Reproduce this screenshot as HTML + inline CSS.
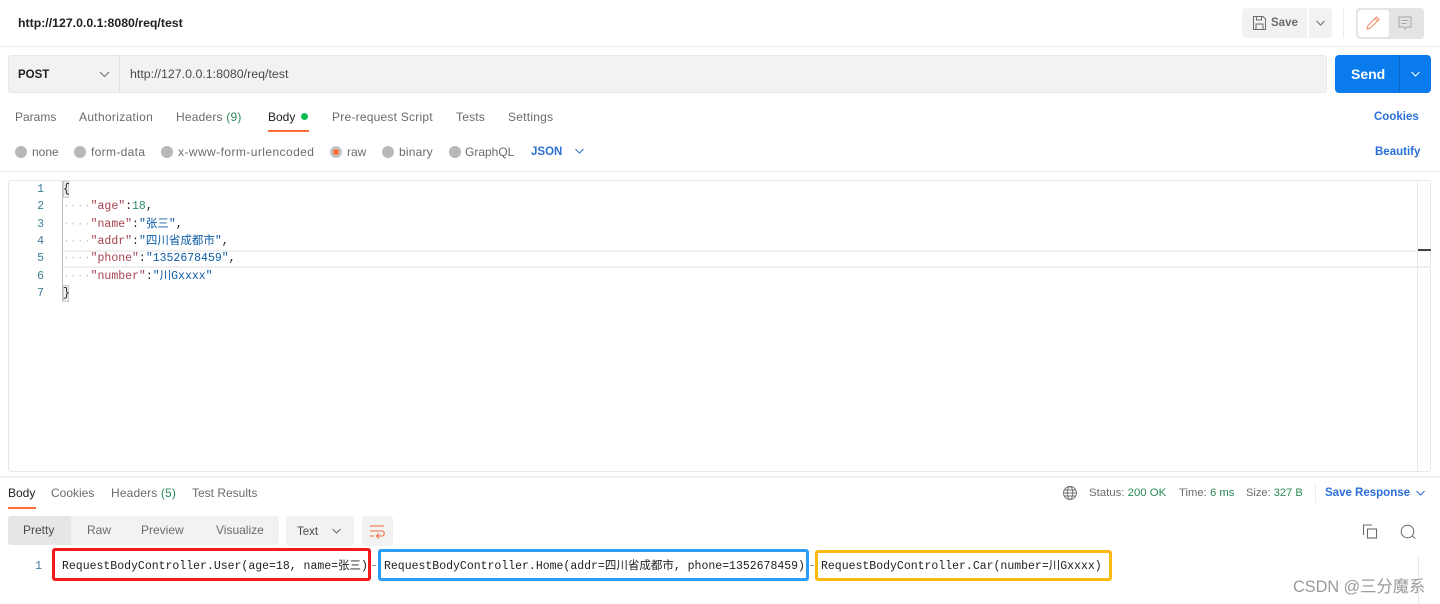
<!DOCTYPE html>
<html><head><meta charset="utf-8">
<style>
html,body{margin:0;padding:0;background:#fff}
#p{position:relative;width:1440px;height:604px;overflow:hidden;background:#fff;font-family:"Liberation Sans","Noto Sans CJK SC",sans-serif;font-size:12px;color:#6b6b6b;filter:blur(.3px)}
#p div,#p svg{position:absolute}
.t{white-space:nowrap;line-height:16px}
.m{font-family:"Liberation Mono","Noto Sans CJK SC",monospace;font-size:11.5px;white-space:pre;line-height:17px}
.n{color:#3f7f97;width:20px;text-align:right;left:24px}
.k{color:#a5424f}.s{color:#0f5ea8}.d{color:#c9c9c9}.g{color:#2f8f6b}.b{color:#212121}
.r{width:12px;height:12px;border-radius:50%;background:#b8b8b8;top:146px}
.gr{color:#2a8a55}
</style></head><body><div id="p">

<div class="t" style="left:18px;top:15px;font-size:12.3px;font-weight:bold;color:#212121">http://127.0.0.1:8080/req/test</div>
<div style="left:1242px;top:8px;width:65px;height:30px;background:#f2f2f2;border-radius:4px 0 0 4px"></div>
<div style="left:1309px;top:8px;width:23px;height:30px;background:#f2f2f2;border-radius:0 4px 4px 0"></div>
<svg style="left:1252px;top:15px" width="15" height="16" viewBox="0 0 15 16" fill="none" stroke="#6b6b6b" stroke-width="1"><path d="M1.5 1.5H11L13.5 4V14.5H1.5Z M4 14.5V9H11V14.5 M4.5 1.5V5H9.5V1.5"/></svg>
<div class="t" style="left:1271px;top:15px;font-size:11.5px;font-weight:bold;color:#6b6b6b">Save</div>
<svg style="left:1315px;top:19px" width="11" height="8" viewBox="0 0 11 8" fill="none" stroke="#6b6b6b"><path d="M1.5 2L5.5 6L9.5 2"/></svg>
<div style="left:1343px;top:8px;width:1px;height:30px;background:#ededed"></div>
<div style="left:1356px;top:8px;width:68px;height:31px;background:#e4e4e4;border-radius:4px"></div>
<div style="left:1358px;top:10px;width:31px;height:27px;background:#fff;border-radius:3px"></div>
<svg style="left:1365px;top:15px" width="16" height="16" viewBox="0 0 16 16" fill="none" stroke="#f2906e" stroke-width="1.1"><path d="M2 14L3 10.5L11.5 2L14 4.5L5.5 13Z M10 3.5L12.5 6"/></svg>
<svg style="left:1397px;top:15px" width="16" height="16" viewBox="0 0 16 16" fill="none" stroke="#a6a6a6"><path d="M2 2H14V12H9.5L8 14L6.5 12H2Z M4.5 5.5H11.5 M4.5 8.5H9.5"/></svg>
<div style="left:0;top:46px;width:1440px;height:1px;background:#ededed"></div>

<div style="left:8px;top:55px;width:1319px;height:38px;background:#f2f2f2;border:1px solid #e8e8e8;border-radius:3px;box-sizing:border-box"></div>
<div style="left:119px;top:55px;width:1px;height:38px;background:#e4e4e4"></div>
<div class="t" style="left:18px;top:67px;font-size:11.5px;font-weight:bold;color:#212121">POST</div>
<svg style="left:98px;top:70px" width="13" height="9" viewBox="0 0 13 9" fill="none" stroke="#6b6b6b"><path d="M2 2L6.5 6.5L11 2"/></svg>
<div class="t" style="left:130px;top:66px;font-size:12.4px;color:#4a4a4a">http://127.0.0.1:8080/req/test</div>
<div style="left:1335px;top:55px;width:96px;height:38px;background:#097bed;border-radius:4px"></div>
<div style="left:1399px;top:55px;width:1px;height:38px;background:#0767c8"></div>
<div class="t" style="left:1351px;top:66px;font-size:14px;font-weight:bold;color:#fff">Send</div>
<svg style="left:1410px;top:70px" width="11" height="8" viewBox="0 0 11 8" fill="none" stroke="#fff"><path d="M1.5 2L5.5 6L9.5 2"/></svg>

<div class="t" style="left:15px;top:109px">Params</div>
<div class="t" style="left:79px;top:109px;letter-spacing:.31px">Authorization</div>
<div class="t" style="left:176px;top:109px;letter-spacing:.2px">Headers <span class="gr">(9)</span></div>
<div class="t" style="left:268px;top:109px;color:#212121">Body</div>
<div style="left:301px;top:113px;width:7px;height:7px;border-radius:50%;background:#0cbb52"></div>
<div style="left:268px;top:130px;width:41px;height:2px;background:#ff6c37"></div>
<div class="t" style="left:332px;top:109px;letter-spacing:.23px">Pre-request Script</div>
<div class="t" style="left:456px;top:109px;letter-spacing:.2px">Tests</div>
<div class="t" style="left:508px;top:109px;letter-spacing:.25px">Settings</div>
<div class="t" style="left:1374px;top:109px;color:#2a6fd6;font-weight:bold;font-size:11.5px">Cookies</div>

<div class="r" style="left:15px"></div><div class="t" style="left:32px;top:144px">none</div>
<div class="r" style="left:74px"></div><div class="t" style="left:91px;top:144px;letter-spacing:.33px">form-data</div>
<div class="r" style="left:161px"></div><div class="t" style="left:178px;top:144px;letter-spacing:.43px">x-www-form-urlencoded</div>
<div class="r" style="left:330px;background:#c4c4c4"></div><div style="left:333px;top:149px;width:6px;height:6px;border-radius:50%;background:#ff6c37"></div><div class="t" style="left:347px;top:144px">raw</div>
<div class="r" style="left:382px"></div><div class="t" style="left:399px;top:144px;letter-spacing:.2px">binary</div>
<div class="r" style="left:449px"></div><div class="t" style="left:465px;top:144px">GraphQL</div>
<div class="t" style="left:531px;top:144px;color:#2a6fd6;font-weight:bold;font-size:11.5px">JSON</div>
<svg style="left:574px;top:147px" width="11" height="8" viewBox="0 0 11 8" fill="none" stroke="#2a6fd6"><path d="M1.5 2L5.5 6L9.5 2"/></svg>
<div class="t" style="left:1375px;top:144px;color:#2a6fd6;font-weight:bold;font-size:11.5px">Beautify</div>
<div style="left:0;top:171px;width:1440px;height:1px;background:#ededed"></div>

<div style="left:8px;top:180px;width:1423px;height:292px;border:1px solid #e8e8e8;border-radius:3px;box-sizing:border-box"></div>
<div style="left:1417px;top:180px;width:1px;height:292px;background:#e8e8e8"></div>
<div style="left:62px;top:250px;width:1369px;height:18px;border-top:2px solid #efefef;border-bottom:2px solid #efefef;box-sizing:border-box"></div>
<div style="left:1418px;top:249px;width:13px;height:2px;background:#444"></div>
<div style="left:62px;top:181px;width:1px;height:120px;background:#bdbdbd"></div>
<div style="left:63px;top:181px;width:6px;height:17px;background:#f0f0f0;border:1px solid #ccc;box-sizing:border-box"></div>
<div style="left:63px;top:285px;width:6px;height:17px;background:#f0f0f0;border:1px solid #ccc;box-sizing:border-box"></div>

<div class="m n" style="top:181px">1</div>
<div class="m n" style="top:198px">2</div>
<div class="m n" style="top:216px">3</div>
<div class="m n" style="top:233px">4</div>
<div class="m n" style="top:250px">5</div>
<div class="m n" style="top:268px">6</div>
<div class="m n" style="top:285px">7</div>
<div class="m b" style="left:63px;top:181px">{</div>
<div class="m" style="left:63px;top:198px"><span class="d">····</span><span class="k">"age"</span><span class="b">:</span><span class="g">18</span><span class="b">,</span></div>
<div class="m" style="left:63px;top:216px"><span class="d">····</span><span class="k">"name"</span><span class="b">:</span><span class="s">"张三"</span><span class="b">,</span></div>
<div class="m" style="left:63px;top:233px"><span class="d">····</span><span class="k">"addr"</span><span class="b">:</span><span class="s">"四川省成都市"</span><span class="b">,</span></div>
<div class="m" style="left:63px;top:250px"><span class="d">····</span><span class="k">"phone"</span><span class="b">:</span><span class="s">"1352678459"</span><span class="b">,</span></div>
<div class="m" style="left:63px;top:268px"><span class="d">····</span><span class="k">"number"</span><span class="b">:</span><span class="s">"川Gxxxx"</span></div>
<div class="m b" style="left:63px;top:285px">}</div>

<div style="left:0;top:476px;width:1440px;height:2px;background:#f2f2f2"></div>
<div class="t" style="left:8px;top:485px;color:#212121">Body</div>
<div style="left:8px;top:507px;width:28px;height:2px;background:#ff6c37"></div>
<div class="t" style="left:51px;top:485px">Cookies</div>
<div class="t" style="left:111px;top:485px;letter-spacing:.15px">Headers <span class="gr">(5)</span></div>
<div class="t" style="left:192px;top:485px">Test Results</div>

<svg style="left:1062px;top:485px" width="16" height="16" viewBox="0 0 16 16" fill="none" stroke="#6b6b6b" stroke-width=".9"><circle cx="8" cy="8" r="6.5"/><ellipse cx="8" cy="8" rx="2.8" ry="6.5"/><path d="M1.5 8H14.5M2.5 5H13.5M2.5 11H13.5"/></svg>
<div class="t" style="left:1089px;top:485px;font-size:11.4px">Status: <span class="gr">200 OK</span></div>
<div class="t" style="left:1179px;top:485px;font-size:11.3px">Time: <span class="gr">6 ms</span></div>
<div class="t" style="left:1246px;top:485px;font-size:11.1px">Size: <span class="gr">327 B</span></div>
<div style="left:1315px;top:483px;width:1px;height:20px;background:#ededed"></div>
<div class="t" style="left:1325px;top:485px;color:#2a6fd6;font-weight:bold;font-size:11.5px">Save Response</div>
<svg style="left:1415px;top:489px" width="11" height="8" viewBox="0 0 11 8" fill="none" stroke="#2a6fd6"><path d="M1.5 2L5.5 6L9.5 2"/></svg>

<div style="left:8px;top:516px;width:271px;height:29px;background:#f2f2f2;border-radius:3px"></div>
<div style="left:8px;top:516px;width:63px;height:29px;background:#e6e6e6;border-radius:3px 0 0 3px"></div>
<div class="t" style="left:23px;top:522px;color:#4a4a4a">Pretty</div>
<div class="t" style="left:87px;top:522px">Raw</div>
<div class="t" style="left:141px;top:522px">Preview</div>
<div class="t" style="left:216px;top:522px">Visualize</div>
<div style="left:286px;top:516px;width:68px;height:30px;background:#f2f2f2;border-radius:3px"></div>
<div class="t" style="left:297px;top:524px;font-size:11.5px;color:#4a4a4a">Text</div>
<svg style="left:331px;top:527px" width="11" height="8" viewBox="0 0 11 8" fill="none" stroke="#6b6b6b"><path d="M1.5 2L5.5 6L9.5 2"/></svg>
<div style="left:362px;top:516px;width:31px;height:30px;background:#f2f2f2;border-radius:3px"></div>
<svg style="left:369px;top:524px" width="17" height="15" viewBox="0 0 17 15" fill="none" stroke="#f0693a" stroke-width="1.1"><path d="M1 2H15 M1 7H13C16 7 16 12 13 12H8 M10 9.5L7.5 12L10 14.5 M1 12H5"/></svg>
<svg style="left:1362px;top:523px" width="16" height="16" viewBox="0 0 16 16" fill="none" stroke="#6b6b6b" stroke-width="1.1"><rect x="5.5" y="6" width="9" height="9"/><path d="M1.5 12V2H10"/></svg>
<svg style="left:1399px;top:523px" width="18" height="18" viewBox="0 0 18 18" fill="none" stroke="#6b6b6b"><circle cx="8.5" cy="8.5" r="6.3"/><path d="M13 13L16.5 15.5"/></svg>

<div style="left:1418px;top:557px;width:1px;height:47px;background:#e8e8e8"></div>

<div style="left:52px;top:548px;width:319px;height:33px;border:3px solid #f21a1a;border-radius:3px;box-sizing:border-box"></div>
<div style="left:378px;top:549px;width:431px;height:32px;border:3px solid #2b9df4;border-radius:3px;box-sizing:border-box"></div>
<div style="left:815px;top:550px;width:297px;height:31px;border:3px solid #fdb90f;border-radius:3px;box-sizing:border-box"></div>

<div class="m n" style="top:558px;left:22px">1</div>
<div class="m b" style="left:62px;top:558px">RequestBodyController.User(age=18, name=张三)</div>
<div style="left:372px;top:565px;width:4px;height:1px;background:#999"></div>
<div class="m b" style="left:384px;top:558px">RequestBodyController.Home(addr=四川省成都市, phone=1352678459)</div>
<div style="left:810px;top:565px;width:4px;height:1px;background:#999"></div>
<div class="m b" style="left:821px;top:558px">RequestBodyController.Car(number=川Gxxxx)</div>

<div class="t" style="left:1293px;top:577px;font-size:16.3px;line-height:20px;color:#9a9a9a">CSDN @三分魔系</div>
</div></body></html>
